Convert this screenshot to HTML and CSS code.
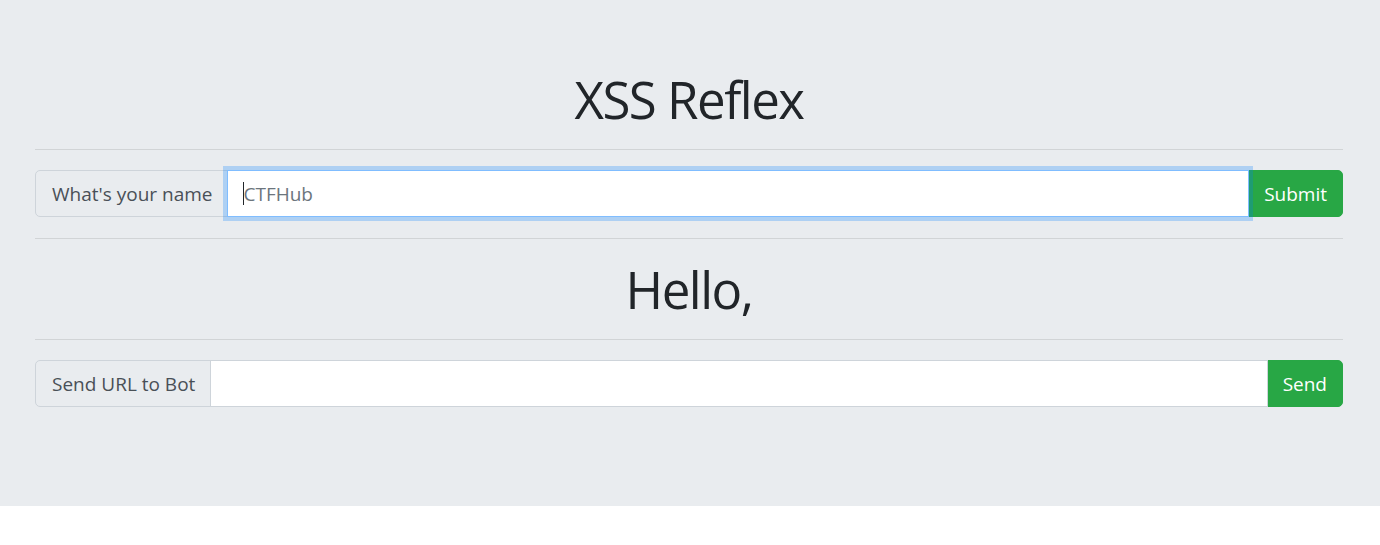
FILE: index.html
```html
<!DOCTYPE html>
<html lang="en">
<head>
<meta charset="utf-8">
<title>XSS Reflex</title>
<link rel="stylesheet" href="styles.css">
</head>
<body>
<div class="jumbotron">
  <h1 class="title">XSS Reflex</h1>
  <hr class="rule">
  <form class="group">
    <span class="addon">What's your name</span>
    <span class="field-wrap focused">
      <input class="field" type="text" name="name" placeholder="CTFHub">
      <span class="caret"></span>
    </span>
    <button class="btn" type="button">Submit</button>
  </form>
  <hr class="rule">
  <h1 class="title">Hello,</h1>
  <hr class="rule">
  <form class="group">
    <span class="addon">Send URL to Bot</span>
    <span class="field-wrap">
      <input class="field" type="text" name="url">
    </span>
    <button class="btn" type="button">Send</button>
  </form>
</div>
</body>
</html>
```
FILE: styles.css
```css
html, body {
  margin: 0;
  padding: 0;
  background: #fff;
}
body {
  font-family: "Open Sans", "Noto Sans", sans-serif;
  font-size: 19px;
  color: #212529;
}
.jumbotron {
  background: #e9ecef;
  padding: 67px 37px 99px 35px;
}
.title {
  margin: 0;
  font-size: 51px;
  line-height: 64px;
  letter-spacing: -1.5px;
  font-weight: 400;
  text-align: center;
  color: #212529;
}
.rule {
  margin: 18px 0;
  border: 0;
  border-top: 1px solid rgba(0, 0, 0, 0.1);
  height: 0;
}
.rule + .group {
  margin-top: 20px;
}
.group {
  display: flex;
  height: 47px;
  margin: 0;
}
.group + .rule {
  margin-top: 21px;
}
.addon {
  display: flex;
  align-items: center;
  padding: 0 15px 0 16px;
  background: #e9ecef;
  border: 1px solid #ced4da;
  border-radius: 5px 0 0 5px;
  color: #495057;
  white-space: nowrap;
}
.field-wrap {
  flex: 1;
  display: flex;
  position: relative;
  margin-left: -1px;
}
.field {
  flex: 1;
  min-width: 0;
  box-sizing: border-box;
  height: 100%;
  margin: 0;
  padding: 0 16px 0 15px;
  border: 1px solid #ced4da;
  border-radius: 0;
  background: #fff;
  font: inherit;
  color: #495057;
  outline: none;
}
.field::placeholder {
  color: #6c757d;
  opacity: 1;
}
.focused {
  z-index: 2;
}
.focused .field {
  border-color: #80bdff;
  box-shadow: 0 0 0 4px rgba(0, 123, 255, 0.25);
}
.caret {
  position: absolute;
  left: 16px;
  top: 12px;
  width: 1px;
  height: 23px;
  background: #212529;
}
.btn {
  margin-left: -1px;
  padding: 0 15px;
  border: 1px solid #28a745;
  border-radius: 0 5px 5px 0;
  background: #28a745;
  color: #fff;
  font: inherit;
  cursor: pointer;
}
```
